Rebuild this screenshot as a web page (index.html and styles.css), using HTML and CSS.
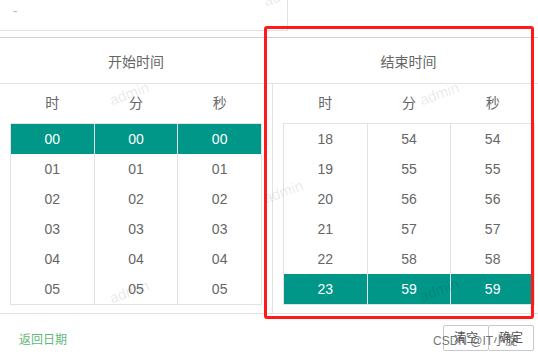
FILE: index.html
```html
<!DOCTYPE html>
<html lang="zh-CN">
<head>
    <meta charset="UTF-8">
    <title>laydate 时间范围</title>
    <link rel="stylesheet" href="styles.css">
</head>
<body>
    <div class="field"><span>-</span></div>

    <div class="laydate">
        <div class="range">
            <div class="main">
                <div class="title">开始时间</div>
                <div class="content">
                    <div class="labels"><p>时</p><p>分</p><p>秒</p></div>
                    <div class="cols">
                        <ol class="col">
                            <li class="on">00</li><li>01</li><li>02</li><li>03</li><li>04</li><li>05</li>
                        </ol>
                        <ol class="col">
                            <li class="on">00</li><li>01</li><li>02</li><li>03</li><li>04</li><li>05</li>
                        </ol>
                        <ol class="col">
                            <li class="on">00</li><li>01</li><li>02</li><li>03</li><li>04</li><li>05</li>
                        </ol>
                    </div>
                </div>
            </div>
            <div class="main">
                <div class="title">结束时间</div>
                <div class="content">
                    <div class="labels"><p>时</p><p>分</p><p>秒</p></div>
                    <div class="cols">
                        <ol class="col">
                            <li>18</li><li>19</li><li>20</li><li>21</li><li>22</li><li class="on">23</li>
                        </ol>
                        <ol class="col">
                            <li>54</li><li>55</li><li>56</li><li>57</li><li>58</li><li class="on">59</li>
                        </ol>
                        <ol class="col">
                            <li>54</li><li>55</li><li>56</li><li>57</li><li>58</li><li class="on">59</li>
                        </ol>
                    </div>
                </div>
            </div>
        </div>
        <div class="footer">
            <span class="back">返回日期</span>
            <div class="btns">
                <span class="btn">清空</span><span class="btn">确定</span>
            </div>
        </div>
    </div>

    <!-- watermarks + annotation on top of the picker -->
    <span class="wm wm-1">admin</span>
    <span class="wm wm-2">admin</span>
    <span class="wm wm-3">admin</span>
    <span class="wm wm-4">admin</span>
    <span class="wm wm-5">admin</span>
    <span class="wm wm-6">admin</span>
    <div class="mark"></div>
    <span class="csdn">CSDN @IT小旋</span>
</body>
</html>
```

FILE: styles.css
```css
body {
    margin: 0;
    width: 538px;
    height: 356px;
    overflow: hidden;
    position: relative;
    background: #fff;
    color: #666;
    font-family: "Liberation Sans", "Noto Sans CJK SC", sans-serif;
}
p, ol {
    margin: 0;
    padding: 0;
}

/* input above the picker */
.field {
    box-sizing: border-box;
    width: 288px;
    height: 31px;
    border-right: 1px solid #e2e2e2;
    border-bottom: 1px solid #e2e2e2;
    padding-left: 13px;
    line-height: 22px;
    font-size: 14px;
    color: #bbb;
}

.laydate {
    box-sizing: border-box;
    width: 547px;
    margin-top: 6px;
    margin-left: -1px;
    border: 1px solid #d2d2d2;
    font-size: 14px;
}
.range {
    display: flex;
}
.main {
    width: 272px;
}
.main + .main {
    width: 273px;
}
.title {
    box-sizing: border-box;
    height: 46px;
    padding-top: 4px;
    line-height: 41px;
    text-align: center;
    border-bottom: 1px solid #e2e2e2;
}
.content {
    padding: 0 10px 8px;
}
.main + .main .content {
    border-left: 1px solid #e2e2e2;
}
.labels {
    display: grid;
    grid-template-columns: repeat(3, 1fr);
    gap: 1px;
    padding: 0 1px;
    height: 39px;
    line-height: 39px;
    text-align: center;
}
.cols {
    display: grid;
    grid-template-columns: repeat(3, 1fr);
    gap: 1px;
    padding: 1px;
    background: #e2e2e2;
}
.col {
    list-style: none;
    background: #fff;
}
.col li {
    height: 30px;
    line-height: 30px;
    text-align: center;
}
.col li.on {
    background: #009688;
    color: #fff;
}

.footer {
    display: flex;
    justify-content: space-between;
    align-items: center;
    padding: 11px 11px 11px 10px;
    border-top: 1px solid #e2e2e2;
    font-size: 12px;
}
.back {
    padding: 0 9px;
    color: #5fb878;
}
.btns {
    display: flex;
}
.btn {
    box-sizing: border-box;
    height: 26px;
    line-height: 24px;
    padding: 0 10px;
    margin-left: -1px;
    border: 1px solid #c9c9c9;
    border-radius: 2px;
    background: #fff;
    color: #555;
}

/* overlays */
.wm {
    position: absolute;
    width: 40px;
    height: 18px;
    line-height: 18px;
    font-size: 15px;
    color: rgba(0, 0, 0, 0.1);
    transform: rotate(-20deg);
    pointer-events: none;
}
.wm-1 { left: 109px; top: 85px; }
.wm-2 { left: 419px; top: 85px; }
.wm-3 { left: 263px; top: 183px; }
.wm-4 { left: 109px; top: 283px; }
.wm-5 { left: 419px; top: 281px; }
.wm-6 { left: 263px; top: -14px; }

.mark {
    position: absolute;
    left: 264px;
    top: 26px;
    width: 270px;
    height: 293px;
    box-sizing: border-box;
    border: 3px solid #fe1a1a;
    border-radius: 3px;
}
.csdn {
    position: absolute;
    left: 433px;
    top: 335px;
    font-size: 12px;
    line-height: 12px;
    color: rgba(70, 70, 70, 0.75);
    white-space: nowrap;
}
```
